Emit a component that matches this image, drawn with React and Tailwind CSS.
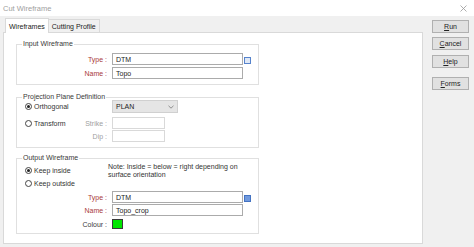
import React from "react";

const F = "font-['Liberation_Sans',Arial,sans-serif]";

function Radio({ checked, label }) {
  return (
    <div className="flex items-center">
      <div className="w-[7px] h-[7px] rounded-full border border-[#444] bg-white flex items-center justify-center">
        {checked && <div className="w-[3px] h-[3px] rounded-full bg-[#222]" />}
      </div>
      <span className="ml-[2px] text-[#333]">{label}</span>
    </div>
  );
}

function GroupLabel({ children }) {
  return (
    <div className="-mt-[7px] ml-[5px] px-[1px] h-[12px] leading-[12px] bg-white w-fit text-[#3a3a3a]">
      {children}
    </div>
  );
}

function Field({ label, value, labelClass = "text-[#a83a3a]", icon, className = "" }) {
  return (
    <div className={"flex items-center h-[12px] " + className}>
      <div className={"w-[90px] text-right " + labelClass}>{label}</div>
      <div className="ml-[5px] w-[131px] h-[12px] border border-[#ababab] bg-white flex items-center pl-[3px] text-[#222]">
        {value}
      </div>
      {icon === "outline" && (
        <div className="ml-[1px] mt-[3px] w-[7px] h-[7px] border border-[#5683cc] bg-[#dfe8f6]" />
      )}
      {icon === "filled" && (
        <div className="ml-[1px] mt-[2px] w-[7px] h-[7px] border border-[#4473c2] bg-[#7099dd]" />
      )}
    </div>
  );
}

function Btn({ u, rest, className = "" }) {
  return (
    <div
      className={
        "w-[37px] h-[13px] border border-[#b0b0b0] bg-[#e1e1e1] flex items-center justify-center text-[#222] " +
        className
      }
    >
      <span>
        <span className="underline">{u}</span>
        {rest}
      </span>
    </div>
  );
}

export default function App() {
  return (
    <div className={"w-[474px] h-[247px] bg-[#f0f0f0] overflow-hidden text-[7px] leading-[9px] " + F}>
      {/* title bar */}
      <div className="h-[16px] bg-white flex items-center justify-between pl-[3px] pr-[7px]">
        <span className="text-[7.5px] text-[#a0a0a0]">Cut Wireframe</span>
        <svg width="7" height="7" viewBox="0 0 7 7">
          <path d="M0.5 0.5 L6.5 6.5 M6.5 0.5 L0.5 6.5" stroke="#999" strokeWidth="0.8" fill="none" />
        </svg>
      </div>

      <div className="flex">
        {/* left: tabs + panel */}
        <div className="ml-[3px] w-[420px] flex flex-col">
          <div className="h-[16px] flex items-end pl-[2px]">
            <div className="relative z-10 -mb-px h-[15px] px-[3px] bg-white border border-b-0 border-[#d9d9d9] flex items-center text-[#222]">
              Wireframes
            </div>
            <div className="h-[13px] px-[3px] bg-[#f0f0f0] border border-l-0 border-b-0 border-[#d9d9d9] flex items-center text-[#222]">
              Cutting Profile
            </div>
          </div>
          <div className="h-[212px] bg-white border border-[#d9d9d9] pt-[11px] pl-[12px]">
            {/* Input Wireframe */}
            <div className="w-[243px] h-[41px] border border-[#e0e0e0]">
              <GroupLabel>Input Wireframe</GroupLabel>
              <Field label="Type :" value="DTM" icon="outline" className="mt-[3px]" />
              <Field label="Name :" value="Topo" className="mt-[2px]" />
            </div>

            {/* Projection Plane Definition */}
            <div className="mt-[12px] w-[243px] h-[51px] border border-[#e0e0e0]">
              <GroupLabel>Projection Plane Definition</GroupLabel>
              <div className="-mt-[3px] flex items-center h-[13px]">
                <div className="w-[95px] pl-[8px] flex items-center">
                  <Radio checked label="Orthogonal" />
                </div>
                <div className="w-[66px] h-[13px] border border-[#d0d0d0] bg-[#e5e5e5] flex items-center justify-between pl-[3px] pr-[3px] text-[#222]">
                  <span>PLAN</span>
                  <svg width="6" height="4" viewBox="0 0 6 4">
                    <path d="M0.5 0.8 L3 3.2 L5.5 0.8" stroke="#777" strokeWidth="0.8" fill="none" />
                  </svg>
                </div>
              </div>
              <div className="mt-[4px] flex items-center h-[12px]">
                <div className="w-[95px] pl-[8px] pr-[5px] flex items-center">
                  <Radio label="Transform" />
                  <span className="ml-auto text-[#a0a0a0]">Strike :</span>
                </div>
                <div className="w-[53px] h-[12px] border border-[#d9d9d9] bg-white" />
              </div>
              <div className="mt-[1px] flex items-center h-[12px]">
                <div className="w-[95px] pr-[5px] text-right text-[#a0a0a0]">Dip :</div>
                <div className="w-[53px] h-[12px] border border-[#d9d9d9] bg-white" />
              </div>
            </div>

            {/* Output Wireframe */}
            <div className="mt-[10px] w-[243px] h-[76px] border border-[#e0e0e0]">
              <GroupLabel>Output Wireframe</GroupLabel>
              <div className="flex">
                <div className="w-[91px] pl-[8px] flex flex-col">
                  <div className="h-[12px] flex items-center">
                    <Radio checked label="Keep inside" />
                  </div>
                  <div className="mt-[1px] h-[12px] flex items-center">
                    <Radio label="Keep outside" />
                  </div>
                </div>
                <div className="-mt-[1px] leading-[8px] text-[#333]">
                  Note: Inside = below = right depending on
                  <br />
                  surface orientation
                </div>
              </div>
              <Field label="Type :" value="DTM" icon="filled" className="mt-[2px]" />
              <Field label="Name :" value="Topo_crop" className="mt-[1px]" />
              <div className="mt-[2px] flex items-center h-[12px]">
                <div className="w-[90px] text-right text-[#3a3a3a]">Colour :</div>
                <div className="ml-[5px] w-[11px] h-[10px] border border-[#3a3a3a] bg-[#00e600]" />
              </div>
            </div>
          </div>
        </div>

        {/* right: buttons */}
        <div className="ml-[9px] flex flex-col">
          <Btn u="R" rest="un" className="mt-[4px]" />
          <Btn u="C" rest="ancel" className="mt-[4px]" />
          <Btn u="H" rest="elp" className="mt-[5px]" />
          <Btn u="F" rest="orms" className="mt-[9px]" />
        </div>
      </div>
    </div>
  );
}
